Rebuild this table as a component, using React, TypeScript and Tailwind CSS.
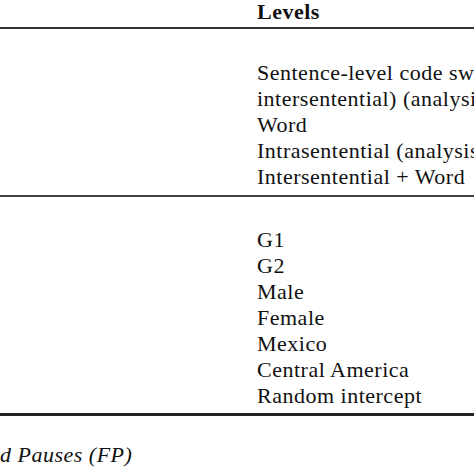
import React from 'react';

const firstBlock = [
  'Sentence-level code switching (intrasentential +',
  'intersentential) (analysis 1)',
  'Word',
  'Intrasentential (analysis 2)',
  'Intersentential + Word',
];

const secondBlock = ['G1', 'G2', 'Male', 'Female', 'Mexico', 'Central America', 'Random intercept'];

const App: React.FC = () => {
  return (
    <div
      className="w-[474px] h-[474px] overflow-hidden bg-white text-[#111] whitespace-nowrap tracking-[0.5px]"
      style={{ fontFamily: '"Liberation Serif", "DejaVu Serif", serif' }}
    >
      {/* Header */}
      <div className="h-[27px] pl-[257px] text-[22px] font-bold leading-[24px]">Levels</div>
      <div className="h-[2px] bg-[#333]" />

      {/* Levels block 1 */}
      <div className="pt-[31px] pb-[5px] pl-[257px] text-[22px] leading-[26px]">
        {firstBlock.map((t) => (
          <div key={t}>{t}</div>
        ))}
      </div>
      <div className="h-[2px] bg-[#444]" />

      {/* Levels block 2 */}
      <div className="pt-[30px] pb-[4px] pl-[257px] text-[22px] leading-[26px]">
        {secondBlock.map((t) => (
          <div key={t}>{t}</div>
        ))}
      </div>
      <div className="h-[3px] bg-[#222]" />

      {/* Caption */}
      <div className="pt-[26px] text-[22px] italic leading-[26px]">d Pauses (FP)</div>
    </div>
  );
};

export default App;
